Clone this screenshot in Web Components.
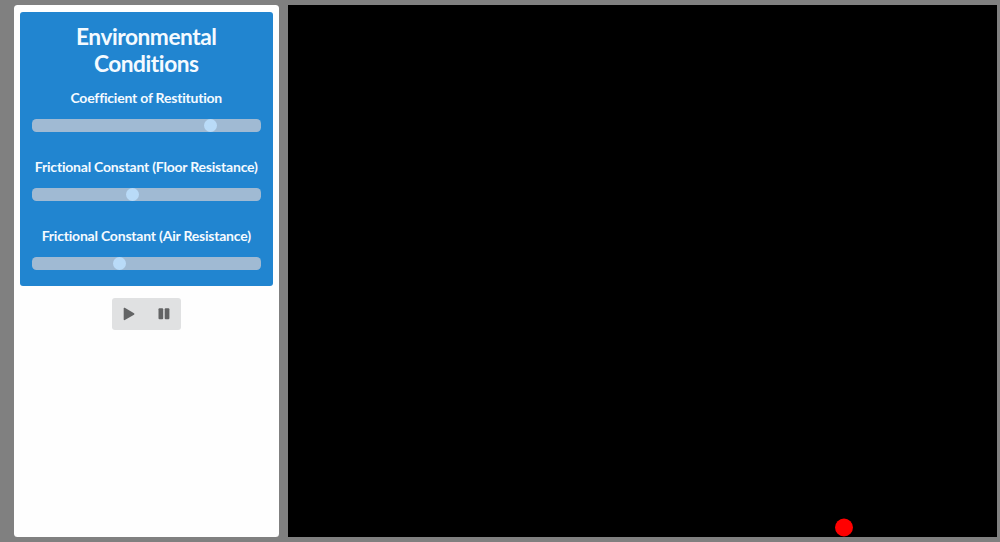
<!DOCTYPE html>
<html lang="en">
<head>
<meta charset="utf-8">
<title>Bouncing Ball</title>
<style>
  body {
    margin: 0;
    height: 100vh;
    overflow: hidden;
    background-color: #808080;
    font-family: Lato, "Liberation Sans", sans-serif;
    font-variant-ligatures: none;
  }
</style>
</head>
<body>
<sim-app>
  <side-panel slot="side">
    <condition-card heading="Environmental Conditions">
      <range-field label="Coefficient of Restitution" value="79.8"></range-field>
      <range-field label="Frictional Constant (Floor Resistance)" value="43.7"></range-field>
      <range-field label="Frictional Constant (Air Resistance)" value="37.5"></range-field>
    </condition-card>
    <play-controls></play-controls>
  </side-panel>
  <ball-stage x="556" y="522.5" radius="9"></ball-stage>
</sim-app>

<script>
class SimApp extends HTMLElement {
  constructor() {
    super();
    this.attachShadow({ mode: "open" }).innerHTML = `
      <style>
        :host {
          display: grid;
          grid-template-columns: 265.5px 709px;
          column-gap: 9px;
          box-sizing: border-box;
          height: 542px;
          padding: 5px 3px 5.5px 13.5px;
        }
      </style>
      <slot name="side"></slot>
      <slot></slot>
    `;
  }
}

class SidePanel extends HTMLElement {
  constructor() {
    super();
    this.attachShadow({ mode: "open" }).innerHTML = `
      <style>
        :host {
          display: flex;
          flex-direction: column;
          align-items: center;
          gap: 12.4px;
          box-sizing: border-box;
          padding: 6.5px 6px;
          background-color: #fefefe;
          border-radius: 3.5px;
        }
      </style>
      <slot></slot>
    `;
  }
}

class ConditionCard extends HTMLElement {
  constructor() {
    super();
    this.attachShadow({ mode: "open" }).innerHTML = `
      <style>
        :host {
          display: block;
          box-sizing: border-box;
          width: 100%;
          height: 274.5px;
          padding: 12.5px;
          background-color: #2185d0;
          border-radius: 3px;
          color: #f4faff;
          text-align: center;
        }

        h2 {
          margin: 0 0 13px;
          font-size: 22.7px;
          font-weight: 700;
          line-height: 26.5px;
          letter-spacing: -0.45px;
        }
      </style>
      <h2></h2>
      <slot></slot>
    `;
  }

  connectedCallback() {
    this.shadowRoot.querySelector("h2").textContent = this.getAttribute("heading");
  }
}

class RangeField extends HTMLElement {
  constructor() {
    super();
    this.attachShadow({ mode: "open" }).innerHTML = `
      <style>
        :host {
          display: block;
          height: 69px;
        }

        label {
          display: block;
          height: 29px;
          font-size: 14px;
          font-weight: 700;
          line-height: 15px;
          letter-spacing: -0.21px;
          white-space: nowrap;
        }

        input {
          -webkit-appearance: none;
          appearance: none;
          display: block;
          width: 100%;
          height: 13px;
          margin: 0;
          border-radius: 4.5px;
          background: #a0bad3;
          outline: none;
        }

        input::-webkit-slider-thumb {
          -webkit-appearance: none;
          appearance: none;
          width: 13.5px;
          height: 13.5px;
          border-radius: 50%;
          background: #b9dbf8;
          cursor: pointer;
        }
      </style>
      <label for="range"></label>
      <input id="range" type="range" min="0" max="100" step="0.1">
    `;
  }

  connectedCallback() {
    this.shadowRoot.querySelector("label").textContent = this.getAttribute("label");
    this.shadowRoot.querySelector("input").value = this.getAttribute("value");
  }
}

class PlayControls extends HTMLElement {
  constructor() {
    super();
    this.attachShadow({ mode: "open" }).innerHTML = `
      <style>
        :host {
          display: flex;
          width: 69px;
          height: 32px;
          border-radius: 3px;
          overflow: hidden;
          background-color: #e0e1e2;
        }

        button {
          flex: 1;
          display: flex;
          align-items: center;
          justify-content: center;
          padding: 0;
          border: 0;
          background: none;
          color: #636465;
          cursor: pointer;
        }

        svg {
          fill: currentColor;
        }
      </style>
      <button id="play" aria-label="Play">
        <svg width="12" height="14" viewBox="0 0 12 14"><path d="M0.7 1.5Q0.7 0.3 1.8 0.8L11 6.2Q12 7 11 7.7L1.8 13Q0.7 13.5 0.7 12.3Z"/></svg>
      </button>
      <button id="pause" aria-label="Pause">
        <svg width="12" height="14" viewBox="0 0 12 14"><rect x="0.5" y="1.3" width="4.7" height="11" rx="1"/><rect x="6.7" y="1.3" width="4.7" height="11" rx="1"/></svg>
      </button>
    `;
  }
}

class BallStage extends HTMLElement {
  constructor() {
    super();
    this.attachShadow({ mode: "open" }).innerHTML = `
      <style>
        :host {
          display: block;
          background-color: #000;
        }

        svg {
          display: block;
          width: 100%;
          height: 100%;
        }
      </style>
      <svg><circle fill="#f00"/></svg>
    `;
  }

  connectedCallback() {
    const ball = this.shadowRoot.querySelector("circle");
    ball.setAttribute("cx", this.getAttribute("x"));
    ball.setAttribute("cy", this.getAttribute("y"));
    ball.setAttribute("r", this.getAttribute("radius"));
  }
}

customElements.define("sim-app", SimApp);
customElements.define("side-panel", SidePanel);
customElements.define("condition-card", ConditionCard);
customElements.define("range-field", RangeField);
customElements.define("play-controls", PlayControls);
customElements.define("ball-stage", BallStage);
</script>
</body>
</html>
